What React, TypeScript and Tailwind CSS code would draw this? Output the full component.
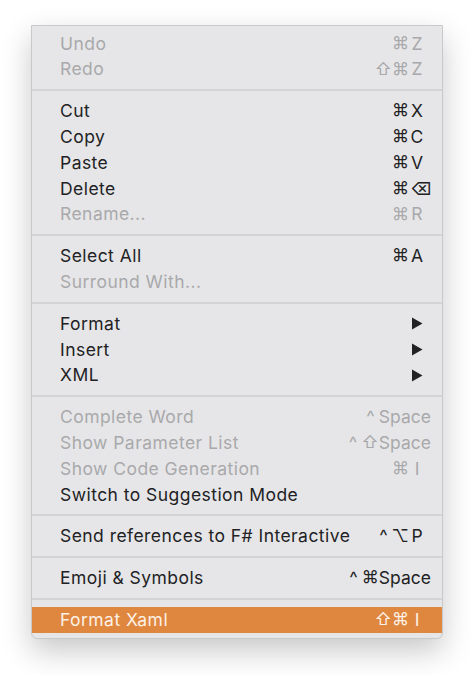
import React from 'react';

type Item =
    | { sep: true }
    | {
          sep?: false;
          label: string;
          mods?: string;
          keyName?: string;
          disabled?: boolean;
          submenu?: boolean;
          active?: boolean;
      };

const items: Item[] = [
    { label: 'Undo', mods: '⌘', keyName: 'Z', disabled: true },
    { label: 'Redo', mods: '⇧⌘', keyName: 'Z', disabled: true },
    { sep: true },
    { label: 'Cut', mods: '⌘', keyName: 'X' },
    { label: 'Copy', mods: '⌘', keyName: 'C' },
    { label: 'Paste', mods: '⌘', keyName: 'V' },
    { label: 'Delete', mods: '⌘', keyName: '⌫' },
    { label: 'Rename...', mods: '⌘', keyName: 'R', disabled: true },
    { sep: true },
    { label: 'Select All', mods: '⌘', keyName: 'A' },
    { label: 'Surround With...', disabled: true },
    { sep: true },
    { label: 'Format', submenu: true },
    { label: 'Insert', submenu: true },
    { label: 'XML', submenu: true },
    { sep: true },
    { label: 'Complete Word', mods: '^', keyName: 'Space', disabled: true },
    { label: 'Show Parameter List', mods: '^⇧', keyName: 'Space', disabled: true },
    { label: 'Show Code Generation', mods: '⌘', keyName: 'I', disabled: true },
    { label: 'Switch to Suggestion Mode' },
    { sep: true },
    { label: 'Send references to F# Interactive', mods: '^⌥', keyName: 'P' },
    { sep: true },
    { label: 'Emoji & Symbols', mods: '^⌘', keyName: 'Space' },
    { sep: true },
    { label: 'Format Xaml', mods: '⇧⌘', keyName: 'I', active: true },
];

const font = { fontFamily: 'Inter, "DejaVu Sans", sans-serif' };

// modifier glyphs; the caret sits a bit apart like the mac menu draws it
const Mods: React.FC<{ mods: string }> = ({ mods }) => (
    <span className="flex items-center">
        {mods.split('').map((m, i) =>
            m === '^' ? (
                <span key={i} className="mr-[4px] text-[18px]">
                    ^
                </span>
            ) : (
                <span key={i} className="text-[17px]">
                    {m}
                </span>
            )
        )}
    </span>
);

const Shortcut: React.FC<{ mods?: string; keyName?: string; submenu?: boolean }> = ({ mods, keyName, submenu }) => {
    if (submenu) {
        return (
            <span className="w-[16px] flex justify-center">
                <svg width="12" height="13" viewBox="0 0 12 13">
                    <path d="M1 0.5 L11.5 6.5 L1 12.5 Z" fill="currentColor" />
                </svg>
            </span>
        );
    }
    if (!keyName) return null;
    const wide = keyName === 'Space';
    const del = keyName === '⌫';
    return (
        <span className="flex items-center tracking-normal">
            {mods && <Mods mods={mods} />}
            {wide ? (
                <span className="mr-[-6px]">{keyName}</span>
            ) : del ? (
                <span className="mr-[-8px] w-[24px] text-center">{keyName}</span>
            ) : (
                <span className="w-[16px] text-center">{keyName}</span>
            )}
        </span>
    );
};

export default function App() {
    return (
        <div className="min-h-screen bg-white pt-[25px] pl-[31px]" style={font}>
            <div className="w-[412px] bg-[#e6e6e8] border border-[#c9c9cb] rounded-b-[6px] pt-[4.5px] pb-[5px] shadow-[0_12px_30px_rgba(0,0,0,0.22)]">
                {items.map((it, i) =>
                    it.sep ? (
                        <div key={i} className="h-[16px] flex items-center">
                            <div className="w-full h-[2px] bg-[#d3d3d5]" />
                        </div>
                    ) : (
                        <div
                            key={i}
                            className={`h-[25.8px] flex items-center justify-between pl-[28px] pr-[17px] text-[17.5px] tracking-[0.45px] leading-none ${
                                it.active
                                    ? 'bg-[#e0873f] text-[#fdf1e6]'
                                    : it.disabled
                                    ? 'text-[#a9a9ab]'
                                    : 'text-[#222224]'
                            }`}
                        >
                            <span>{it.label}</span>
                            <Shortcut mods={it.mods} keyName={it.keyName} submenu={it.submenu} />
                        </div>
                    )
                )}
            </div>
        </div>
    );
}
